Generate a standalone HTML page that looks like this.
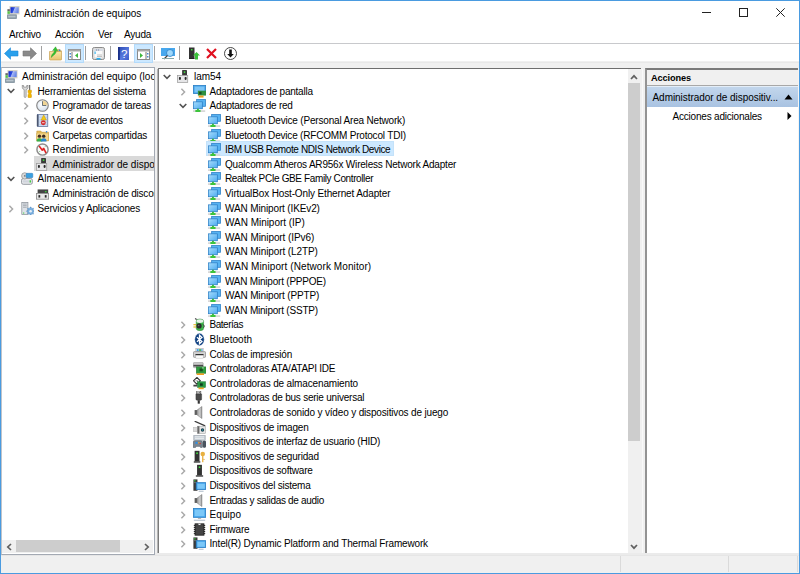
<!DOCTYPE html>
<html><head><meta charset="utf-8"><style>
html,body{margin:0;padding:0}
body{width:800px;height:574px;position:relative;overflow:hidden;background:#f0f0f0;font-family:"Liberation Sans", sans-serif}
#win{position:absolute;left:0;top:0;width:798px;height:572px;border:1px solid #4a9be0;background:#f0f0f0}
.t{position:absolute;white-space:nowrap;font-size:10px;line-height:14.6px;letter-spacing:-0.2px;color:#000}
</style></head><body>
<div id="win"></div>
<div style="position:absolute;left:1px;top:1px;width:798px;height:60px;background:#fff"></div>
<svg style="position:absolute;left:7.2px;top:5.6px" width="13" height="13" viewBox="0 0 16 16"><defs><linearGradient id="scr" x1="0" y1="0" x2="1" y2="0.3"><stop offset="0" stop-color="#0a1ec8"/><stop offset="0.45" stop-color="#3050e0"/><stop offset="0.55" stop-color="#a8b8f4"/><stop offset="1" stop-color="#6a88e8"/></linearGradient></defs>
<rect x="3" y="0" width="12.4" height="10.3" fill="#d8d4c6"/><rect x="4.3" y="1.5" width="10.1" height="7.3" fill="url(#scr)"/>
<rect x="0.5" y="3.9" width="3" height="2.5" fill="#666"/><rect x="0.5" y="6.4" width="3" height="3.3" fill="#58c048"/>
<rect x="0" y="10" width="12.2" height="6" rx="1" fill="#8c9ba6"/><rect x="1.5" y="12" width="9" height="2" fill="#b8c4cc"/></svg>
<div class="t" style="left:24px;top:6.9px;letter-spacing:0px">Administración de equipos</div>
<div style="position:absolute;left:702px;top:12px;width:9px;height:1px;background:#222"></div>
<div style="position:absolute;left:739px;top:8px;width:7px;height:7px;border:1px solid #222"></div>
<svg style="position:absolute;left:776px;top:8px" width="9" height="9" viewBox="0 0 9 9"><path d="M0.3 0.3 L8.7 8.7 M8.7 0.3 L0.3 8.7" stroke="#222" stroke-width="1"/></svg>
<div class="t" style="left:9px;top:27.9px;">Archivo</div>
<div class="t" style="left:55px;top:27.9px;">Acción</div>
<div class="t" style="left:98px;top:27.9px;">Ver</div>
<div class="t" style="left:124px;top:27.9px;">Ayuda</div>
<div style="position:absolute;left:1px;top:43px;width:798px;height:1px;background:#c8c9cc"></div>
<div style="position:absolute;left:1px;top:62px;width:798px;height:1px;background:#e8e8e8"></div>
<div style="position:absolute;left:65px;top:44px;width:17px;height:17px;background:#cce8ff;border:1px solid #b4dbfb"></div>
<div style="position:absolute;left:134px;top:44px;width:17px;height:17px;background:#cce8ff;border:1px solid #b4dbfb"></div>
<div style="position:absolute;left:41px;top:46px;width:1px;height:14px;background:#a0a0a0"></div>
<div style="position:absolute;left:85px;top:46px;width:1px;height:14px;background:#a0a0a0"></div>
<div style="position:absolute;left:110px;top:46px;width:1px;height:14px;background:#a0a0a0"></div>
<div style="position:absolute;left:154px;top:46px;width:1px;height:14px;background:#a0a0a0"></div>
<div style="position:absolute;left:179px;top:46px;width:1px;height:14px;background:#a0a0a0"></div>
<svg style="position:absolute;left:4px;top:47px" width="15" height="13" viewBox="0 0 15 13"><path d="M0.5 6.5 L6.5 0.8 V4 H14 V9 H6.5 V12.2 Z" fill="#2aa0ec" stroke="#1a88d8" stroke-width="0.6"/></svg>
<svg style="position:absolute;left:22px;top:47px" width="15" height="13" viewBox="0 0 15 13"><path d="M14.5 6.5 L8.5 0.8 V4 H1 V9 H8.5 V12.2 Z" fill="#8a8a8a" stroke="#777" stroke-width="0.6"/></svg>
<svg style="position:absolute;left:49px;top:46px" width="13" height="15" viewBox="0 0 13 15"><defs><linearGradient id="fo" x1="0" y1="0" x2="0" y2="1"><stop offset="0" stop-color="#fae6a8"/><stop offset="1" stop-color="#e8c470"/></linearGradient></defs><path d="M6 3.5 H11 L12.5 5 V5.5 H6 Z" fill="#e8c878" stroke="#c8a050" stroke-width="0.5"/><circle cx="10.5" cy="4.3" r="0.9" fill="#3a8ad8"/><path d="M0.5 5.5 H12.5 V13.5 Q12.5 14 12 14 H1 Q0.5 14 0.5 13.5 Z" fill="url(#fo)" stroke="#c8a050" stroke-width="0.7"/><path d="M2.2 11.5 Q2.8 8 4.8 6.5 Q6 5.5 5.2 4.2 L3.6 4.6 L6.6 0.8 L8.6 5 L7 4.6 Q7.6 6.6 5.8 8.2 Q4 9.6 2.2 11.5 Z" fill="#34c234" stroke="#1e9a1e" stroke-width="0.4"/></svg>
<svg style="position:absolute;left:68px;top:49px" width="13" height="11" viewBox="0 0 13 11"><rect x="0.5" y="0.5" width="12" height="10" fill="#fff" stroke="#8a8a8a"/><rect x="0.5" y="0.5" width="12" height="2" fill="#a8a8a8"/><path d="M4 3 V10" stroke="#777"/><path d="M10 4 L7 6.5 L10 9 Z" fill="#3cb83c"/><rect x="1.5" y="4" width="1.5" height="1.5" fill="#4a8ad0"/><rect x="1.5" y="7" width="1.5" height="1.5" fill="#4a8ad0"/></svg>
<svg style="position:absolute;left:137px;top:49px" width="13" height="11" viewBox="0 0 13 11"><rect x="0.5" y="0.5" width="12" height="10" fill="#fff" stroke="#8a8a8a"/><rect x="0.5" y="0.5" width="12" height="2" fill="#a8a8a8"/><path d="M9 3 V10" stroke="#777"/><path d="M3 4 L6 6.5 L3 9 Z" fill="#3cb83c"/><rect x="10" y="4" width="1.5" height="1.5" fill="#4a8ad0"/><rect x="10" y="7" width="1.5" height="1.5" fill="#4a8ad0"/></svg>
<svg style="position:absolute;left:92px;top:47px" width="13" height="13" viewBox="0 0 13 13"><rect x="0.5" y="0.5" width="12" height="12" rx="1.8" fill="#e8e8e8" stroke="#8a8a8a"/><rect x="2" y="2" width="9" height="9" fill="#fafafa" stroke="#b8b8b8" stroke-width="0.5"/><rect x="2" y="2" width="9" height="2" fill="#d8dce4"/><circle cx="4.5" cy="3" r="0.7" fill="#8a9ab0"/><circle cx="6.5" cy="3" r="0.7" fill="#8a9ab0"/><rect x="2.5" y="4.5" width="1.2" height="2.5" fill="#40b8f0"/><path d="M5 8 H10 M5 9.5 H10" stroke="#9a9a9a" stroke-width="0.6"/><rect x="4.5" y="11" width="4" height="1.6" fill="#2ab0f0"/></svg>
<svg style="position:absolute;left:118px;top:47px" width="11" height="13" viewBox="0 0 11 13"><defs><linearGradient id="hb" x1="0" y1="0" x2="1" y2="1"><stop offset="0" stop-color="#2846b0"/><stop offset="0.6" stop-color="#5a7ce0"/><stop offset="1" stop-color="#3a5ac8"/></linearGradient></defs><rect x="0" y="0" width="11" height="13" fill="url(#hb)"/><rect x="0" y="0" width="1.8" height="13" fill="#1a3088"/><text x="6.2" y="10.8" font-family="Liberation Sans" font-size="11.5" fill="#fff" text-anchor="middle">?</text></svg>
<svg style="position:absolute;left:161px;top:48px" width="14" height="12" viewBox="0 0 14 12"><rect x="0" y="0" width="14" height="8" fill="#48a8ee"/><circle cx="9" cy="5" r="3.5" fill="#9ed8fc" stroke="#2a7fc4" stroke-width="0.8"/><path d="M6.5 7.5 L3 11" stroke="#444" stroke-width="1.3"/><rect x="1" y="10" width="12" height="1" fill="#8aa"/></svg>
<svg style="position:absolute;left:189px;top:47px" width="11" height="13" viewBox="0 0 11 13"><rect x="0" y="0.5" width="5.5" height="11" fill="#333"/><rect x="2" y="2" width="1.5" height="1.5" fill="#3fdc3f"/><rect x="-0.5" y="11" width="6" height="1" fill="#222"/><path d="M7.5 5 L11 8.5 H9 V12.5 H6 V8.5 H4 Z" fill="#3ac03a"/></svg>
<svg style="position:absolute;left:206px;top:48px" width="11" height="11" viewBox="0 0 11 11"><path d="M1 1 L10 10 M10 1 L1 10" stroke="#e01020" stroke-width="2.2"/></svg>
<svg style="position:absolute;left:224px;top:47px" width="13" height="13" viewBox="0 0 13 13"><circle cx="6.5" cy="6.5" r="6" fill="#fff" stroke="#333" stroke-width="0.9"/><path d="M6.5 10.5 L3.2 7 H5.2 V2.5 H7.8 V7 H9.8 Z" fill="#111"/></svg>
<div style="position:absolute;left:1px;top:67px;width:152px;height:486px;border:1px solid #a3a9b3;border-left-color:#c0c4ca;background:#fff;overflow:hidden">
<svg style="position:absolute;left:3px;top:2.200000000000003px" width="13" height="13" viewBox="0 0 16 16"><defs><linearGradient id="scr" x1="0" y1="0" x2="1" y2="0.3"><stop offset="0" stop-color="#0a1ec8"/><stop offset="0.45" stop-color="#3050e0"/><stop offset="0.55" stop-color="#a8b8f4"/><stop offset="1" stop-color="#6a88e8"/></linearGradient></defs>
<rect x="3" y="0" width="12.4" height="10.3" fill="#d8d4c6"/><rect x="4.3" y="1.5" width="10.1" height="7.3" fill="url(#scr)"/>
<rect x="0.5" y="3.9" width="3" height="2.5" fill="#666"/><rect x="0.5" y="6.4" width="3" height="3.3" fill="#58c048"/>
<rect x="0" y="10" width="12.2" height="6" rx="1" fill="#8c9ba6"/><rect x="1.5" y="12" width="9" height="2" fill="#b8c4cc"/></svg>
<div class="t" style="left:20px;top:2.1000000000000028px;letter-spacing:0px">Administración del equipo (local)</div>
<svg style="position:absolute;left:4.049999999999999px;top:18.199999999999992px" width="10" height="10" viewBox="0 0 10 10"><path d="M1.7 3 L5 6.3 L8.3 3" fill="none" stroke="#535353" stroke-width="1.6"/></svg>
<svg style="position:absolute;left:18.5px;top:16.799999999999997px" width="13" height="13" viewBox="0 0 16 16"><path d="M1.6 0 V3 Q1.6 5 3.9 5.6 V14 Q3.9 15.4 5.1 15.4 Q6.3 15.4 6.3 14 V5.6 Q8.6 5 8.6 3 V0 L7 0.6 V2.6 H3.2 V0.6 Z" fill="#dcdcdc" stroke="#7c7c7c" stroke-width="0.8"/>
<rect x="10.2" y="0" width="1.1" height="7" fill="#3a3a3a"/><path d="M8.6 6.4 H12.9 V9 Q12 10 12.1 11 L12.9 12 V14.8 Q12.9 15.6 12 15.6 H9.5 Q8.6 15.6 8.6 14.8 V12 L9.4 11 Q9.5 10 8.6 9 Z" fill="#f2b600" stroke="#c88a00" stroke-width="0.5"/></svg>
<div class="t" style="left:35.5px;top:16.699999999999996px;letter-spacing:-0.204px">Herramientas del sistema</div>
<svg style="position:absolute;left:19.2px;top:33.45px" width="10" height="10" viewBox="0 0 10 10"><path d="M3.4 1.7 L6.6 5 L3.4 8.3" fill="none" stroke="#a8a8a8" stroke-width="1.45"/></svg>
<svg style="position:absolute;left:33.5px;top:31.400000000000006px" width="13" height="13" viewBox="0 0 16 16"><defs><radialGradient id="cf" cx="0.4" cy="0.4" r="0.7"><stop offset="0" stop-color="#ffffff"/><stop offset="1" stop-color="#cfdcec"/></radialGradient></defs>
<circle cx="8" cy="8" r="7.1" fill="url(#cf)" stroke="#858585" stroke-width="1.4"/><path d="M8 8 V1.7 A6.3 6.3 0 0 1 14.3 8 Z" fill="#efd08a" opacity="0.9"/><path d="M8 2.8 V8 H12.5" stroke="#3a4a5a" stroke-width="0.9" fill="none"/></svg>
<div class="t" style="left:50.5px;top:31.300000000000004px;letter-spacing:-0.205px">Programador de tareas</div>
<svg style="position:absolute;left:19.2px;top:48.05px" width="10" height="10" viewBox="0 0 10 10"><path d="M3.4 1.7 L6.6 5 L3.4 8.3" fill="none" stroke="#a8a8a8" stroke-width="1.45"/></svg>
<svg style="position:absolute;left:33.5px;top:46.0px" width="13" height="13" viewBox="0 0 16 16"><rect x="2" y="0.5" width="12.5" height="15" fill="#cddcf2" stroke="#5a6c94" stroke-width="0.9"/><rect x="1" y="1" width="2.2" height="14" fill="#4a5670"/><path d="M4 4 H14 M4 7 H14 M4 10 H14 M4 13 H14" stroke="#a8b8d8" stroke-width="0.6"/>
<path d="M9.5 1 L12.8 7.5 H6.2 Z" fill="#f2c818" stroke="#c09000" stroke-width="0.5"/><circle cx="9" cy="10.8" r="3" fill="#d42a2a"/><rect x="7.4" y="10.3" width="3.2" height="1" fill="#fff"/></svg>
<div class="t" style="left:50.5px;top:45.9px;letter-spacing:-0.247px">Visor de eventos</div>
<svg style="position:absolute;left:19.2px;top:62.65000000000002px" width="10" height="10" viewBox="0 0 10 10"><path d="M3.4 1.7 L6.6 5 L3.4 8.3" fill="none" stroke="#a8a8a8" stroke-width="1.45"/></svg>
<svg style="position:absolute;left:33.5px;top:60.599999999999994px" width="13" height="13" viewBox="0 0 16 16"><path d="M1 2.5 H6 L7 4 H15.5 V14.5 H1 Z" fill="#e8c060" stroke="#b89030" stroke-width="0.6"/><rect x="1" y="5" width="14.5" height="9.5" fill="#f6d88c" stroke="#c8a040" stroke-width="0.6"/><circle cx="13" cy="3.5" r="1" fill="#3a8ad8"/>
<circle cx="4.3" cy="8.8" r="2.1" fill="#4a3020"/><path d="M0.8 15.5 Q0.8 11.5 4.3 11.5 Q7.8 11.5 7.8 15.5 Z" fill="#34b04a"/><circle cx="9.5" cy="8.8" r="2.1" fill="#3a2a20"/><path d="M6 15.5 Q6 11.5 9.5 11.5 Q13 11.5 13 15.5 Z" fill="#2a88d0"/></svg>
<div class="t" style="left:50.5px;top:60.49999999999999px;letter-spacing:-0.158px">Carpetas compartidas</div>
<svg style="position:absolute;left:19.2px;top:77.25000000000001px" width="10" height="10" viewBox="0 0 10 10"><path d="M3.4 1.7 L6.6 5 L3.4 8.3" fill="none" stroke="#a8a8a8" stroke-width="1.45"/></svg>
<svg style="position:absolute;left:33.5px;top:75.19999999999999px" width="13" height="13" viewBox="0 0 16 16"><circle cx="8" cy="8" r="6.9" fill="#fafafa" stroke="#8c8c8c" stroke-width="1.8"/><path d="M3.8 3.8 L8 9.2 L9.3 6.3 L12.4 12.4" stroke="#e02424" stroke-width="2" fill="none" stroke-linejoin="bevel"/><path d="M4 10 L5 11 M11 4 L12 5" stroke="#40a040" stroke-width="0.8"/></svg>
<div class="t" style="left:50.5px;top:75.1px;letter-spacing:0.060px">Rendimiento</div>
<div style="position:absolute;left:32px;top:88.30000000000001px;width:200px;height:14.6px;background:#d9d9d9"></div>
<svg style="position:absolute;left:33.5px;top:89.80000000000001px" width="13" height="13" viewBox="0 0 16 16"><rect x="6.3" y="0" width="6" height="7" rx="0.8" fill="#3a3a3a"/><circle cx="9.3" cy="2.6" r="1.1" fill="#3fe03f"/>
<rect x="0.6" y="6.8" width="12.6" height="8.4" fill="#e6e6e8" stroke="#9a9a9a" stroke-width="0.9"/><rect x="2.4" y="8.6" width="2.4" height="3.6" rx="1" fill="#2a2a2a"/><rect x="9.4" y="8.6" width="2.4" height="3.6" rx="1" fill="#2a2a2a"/></svg>
<div class="t" style="left:50.5px;top:89.70000000000002px;letter-spacing:0px">Administrador de dispositivos</div>
<svg style="position:absolute;left:4.049999999999999px;top:105.80000000000003px" width="10" height="10" viewBox="0 0 10 10"><path d="M1.7 3 L5 6.3 L8.3 3" fill="none" stroke="#535353" stroke-width="1.6"/></svg>
<svg style="position:absolute;left:18.5px;top:104.4px" width="13" height="13" viewBox="0 0 16 16"><rect x="0.6" y="8" width="13.4" height="7.2" rx="2.2" fill="#e4e6ea" stroke="#7a8088" stroke-width="0.9"/><rect x="2.2" y="10.3" width="10" height="2.6" fill="#d0d4dc"/><rect x="10.6" y="10.3" width="1.8" height="2.6" fill="#3fcf3f"/>
<circle cx="4.6" cy="4.8" r="3.9" fill="#d8d8d8" stroke="#888" stroke-width="0.8"/><circle cx="4.6" cy="4.8" r="1" fill="#777"/><rect x="6.3" y="1.6" width="8.2" height="5.4" rx="1" fill="#3aa0e0" stroke="#2a78b8" stroke-width="0.6"/></svg>
<div class="t" style="left:35.5px;top:104.30000000000001px;letter-spacing:0.015px">Almacenamiento</div>
<svg style="position:absolute;left:33.5px;top:119.0px" width="13" height="13" viewBox="0 0 16 16"><rect x="2" y="3" width="13" height="5" fill="#444"/><rect x="11" y="5" width="2" height="1.5" fill="#3fcf3f"/><rect x="0.5" y="8" width="15" height="7" fill="#e8e8e8" stroke="#8a8a8a"/><rect x="3" y="10" width="2.2" height="3" fill="#2a2a2a"/><rect x="10.8" y="10" width="2.2" height="3" fill="#2a2a2a"/></svg>
<div class="t" style="left:50.5px;top:118.9px;">Administración de discos</div>
<svg style="position:absolute;left:4.199999999999999px;top:135.65000000000003px" width="10" height="10" viewBox="0 0 10 10"><path d="M3.4 1.7 L6.6 5 L3.4 8.3" fill="none" stroke="#a8a8a8" stroke-width="1.45"/></svg>
<svg style="position:absolute;left:18.5px;top:133.60000000000002px" width="13" height="13" viewBox="0 0 16 16"><rect x="1" y="0.5" width="7.5" height="15" fill="#dfe3e8" stroke="#8a9098" stroke-width="0.9"/><path d="M2.5 2.5 H7 M2.5 4.5 H7 M2.5 6.5 H7" stroke="#8a9098" stroke-width="0.8"/><rect x="2.5" y="13" width="1.5" height="1.2" fill="#3fcf3f"/>
<path d="M11.2 6.2 L12.4 6.2 L12.7 7.6 L13.9 8.1 L15 7.3 L15.8 8.2 L15 9.3 L15.5 10.5 L16 10.7 V11.9 L15.5 12.1 L15 13.3 L15.8 14.4 L15 15.2 L13.9 14.5 L12.7 15 L12.4 16 H11.2 L10.9 15 L9.7 14.5 L8.6 15.2 L7.8 14.4 L8.6 13.3 L8.1 12.1 L7 11.9 V10.7 L8.1 10.5 L8.6 9.3 L7.8 8.2 L8.6 7.3 L9.7 8.1 L10.9 7.6 Z" fill="#7ab0e0" stroke="#4a80b8" stroke-width="0.5"/><circle cx="11.8" cy="11.3" r="1.6" fill="#e8f0f8"/></svg>
<div class="t" style="left:35.5px;top:133.50000000000003px;letter-spacing:-0.174px">Servicios y Aplicaciones</div>
<div style="position:absolute;left:0px;top:472px;width:151px;height:13px;background:#f0f0f0"></div>
<div style="position:absolute;left:14px;top:472px;width:104px;height:12px;background:#cdcdcd"></div>
<svg style="position:absolute;left:4px;top:474.5px" width="6" height="8" viewBox="0 0 6 8"><path d="M5 1 L1.8 4 L5 7" fill="none" stroke="#606060" stroke-width="1.7"/></svg>
<svg style="position:absolute;left:142px;top:474.5px" width="6" height="8" viewBox="0 0 6 8"><path d="M1 1 L4.2 4 L1 7" fill="none" stroke="#606060" stroke-width="1.7"/></svg>
</div>
<div style="position:absolute;left:158px;top:68px;width:482px;height:484px;border-left:1px solid #7a7a7a;border-top:1px solid #6e6e6e;background:#fff;overflow:hidden">
<svg style="position:absolute;left:3.35px;top:2.599999999999997px" width="10" height="10" viewBox="0 0 10 10"><path d="M1.7 3 L5 6.3 L8.3 3" fill="none" stroke="#535353" stroke-width="1.6"/></svg>
<svg style="position:absolute;left:18px;top:1.2000000000000028px" width="13" height="13" viewBox="0 0 16 16"><rect x="6.3" y="0" width="6" height="7" rx="0.8" fill="#3a3a3a"/><circle cx="9.3" cy="2.6" r="1.1" fill="#3fe03f"/>
<rect x="0.6" y="6.8" width="12.6" height="8.4" fill="#e6e6e8" stroke="#9a9a9a" stroke-width="0.9"/><rect x="2.4" y="8.6" width="2.4" height="3.6" rx="1" fill="#2a2a2a"/><rect x="9.4" y="8.6" width="2.4" height="3.6" rx="1" fill="#2a2a2a"/></svg>
<div class="t" style="left:35px;top:1.1000000000000028px;letter-spacing:-0.013px">lam54</div>
<svg style="position:absolute;left:19.0px;top:17.84999999999999px" width="10" height="10" viewBox="0 0 10 10"><path d="M3.4 1.7 L6.6 5 L3.4 8.3" fill="none" stroke="#a8a8a8" stroke-width="1.45"/></svg>
<svg style="position:absolute;left:33.5px;top:15.799999999999997px" width="13" height="13" viewBox="0 0 16 16"><rect x="0.5" y="0.5" width="15" height="10" fill="#49a6ec" stroke="#2a7fc4"/><rect x="2" y="2" width="12" height="7" fill="#7cc4f6"/>
<rect x="6" y="7" width="10" height="6" fill="#2f8f3f"/><rect x="7.5" y="8.5" width="3" height="3" fill="#1c4d22"/><rect x="7" y="13" width="6" height="2.5" fill="#f0a020"/></svg>
<div class="t" style="left:50.5px;top:15.699999999999998px;letter-spacing:-0.223px">Adaptadores de pantalla</div>
<svg style="position:absolute;left:18.85px;top:31.8px" width="10" height="10" viewBox="0 0 10 10"><path d="M1.7 3 L5 6.3 L8.3 3" fill="none" stroke="#535353" stroke-width="1.6"/></svg>
<svg style="position:absolute;left:33.5px;top:30.400000000000006px" width="13" height="13" viewBox="0 0 16 16"><defs><linearGradient id="nw" x1="0" y1="0" x2="1" y2="1"><stop offset="0" stop-color="#a8ddfc"/><stop offset="1" stop-color="#4caaf0"/></linearGradient></defs><rect x="4.5" y="0.5" width="11" height="8.5" fill="#56b2f2" stroke="#2a7cc4" stroke-width="0.9"/><rect x="0.5" y="3.5" width="11" height="8.5" fill="url(#nw)" stroke="#2a7cc4" stroke-width="0.9"/>
<rect x="0" y="13.8" width="15" height="2.2" fill="#d8d8d8"/><rect x="5" y="12" width="2.2" height="2" fill="#34b834"/><rect x="2.8" y="13.6" width="6.6" height="2.4" rx="0.6" fill="#3cc43c"/></svg>
<div class="t" style="left:50.5px;top:30.300000000000004px;letter-spacing:-0.265px">Adaptadores de red</div>
<svg style="position:absolute;left:49px;top:45.0px" width="13" height="13" viewBox="0 0 16 16"><defs><linearGradient id="nw" x1="0" y1="0" x2="1" y2="1"><stop offset="0" stop-color="#a8ddfc"/><stop offset="1" stop-color="#4caaf0"/></linearGradient></defs><rect x="4.5" y="0.5" width="11" height="8.5" fill="#56b2f2" stroke="#2a7cc4" stroke-width="0.9"/><rect x="0.5" y="3.5" width="11" height="8.5" fill="url(#nw)" stroke="#2a7cc4" stroke-width="0.9"/>
<rect x="0" y="13.8" width="15" height="2.2" fill="#d8d8d8"/><rect x="5" y="12" width="2.2" height="2" fill="#34b834"/><rect x="2.8" y="13.6" width="6.6" height="2.4" rx="0.6" fill="#3cc43c"/></svg>
<div class="t" style="left:66px;top:44.9px;letter-spacing:-0.182px">Bluetooth Device (Personal Area Network)</div>
<svg style="position:absolute;left:49px;top:59.599999999999994px" width="13" height="13" viewBox="0 0 16 16"><defs><linearGradient id="nw" x1="0" y1="0" x2="1" y2="1"><stop offset="0" stop-color="#a8ddfc"/><stop offset="1" stop-color="#4caaf0"/></linearGradient></defs><rect x="4.5" y="0.5" width="11" height="8.5" fill="#56b2f2" stroke="#2a7cc4" stroke-width="0.9"/><rect x="0.5" y="3.5" width="11" height="8.5" fill="url(#nw)" stroke="#2a7cc4" stroke-width="0.9"/>
<rect x="0" y="13.8" width="15" height="2.2" fill="#d8d8d8"/><rect x="5" y="12" width="2.2" height="2" fill="#34b834"/><rect x="2.8" y="13.6" width="6.6" height="2.4" rx="0.6" fill="#3cc43c"/></svg>
<div class="t" style="left:66px;top:59.49999999999999px;letter-spacing:-0.192px">Bluetooth Device (RFCOMM Protocol TDI)</div>
<div style="position:absolute;left:47px;top:72.1px;width:188px;height:14.6px;background:#cce8ff;border:1px solid #c4e2fa;box-sizing:border-box"></div>
<svg style="position:absolute;left:49px;top:74.19999999999999px" width="13" height="13" viewBox="0 0 16 16"><defs><linearGradient id="nw" x1="0" y1="0" x2="1" y2="1"><stop offset="0" stop-color="#a8ddfc"/><stop offset="1" stop-color="#4caaf0"/></linearGradient></defs><rect x="4.5" y="0.5" width="11" height="8.5" fill="#56b2f2" stroke="#2a7cc4" stroke-width="0.9"/><rect x="0.5" y="3.5" width="11" height="8.5" fill="url(#nw)" stroke="#2a7cc4" stroke-width="0.9"/>
<rect x="0" y="13.8" width="15" height="2.2" fill="#d8d8d8"/><rect x="5" y="12" width="2.2" height="2" fill="#34b834"/><rect x="2.8" y="13.6" width="6.6" height="2.4" rx="0.6" fill="#3cc43c"/></svg>
<div class="t" style="left:66px;top:74.1px;letter-spacing:-0.385px">IBM USB Remote NDIS Network Device</div>
<svg style="position:absolute;left:49px;top:88.80000000000001px" width="13" height="13" viewBox="0 0 16 16"><defs><linearGradient id="nw" x1="0" y1="0" x2="1" y2="1"><stop offset="0" stop-color="#a8ddfc"/><stop offset="1" stop-color="#4caaf0"/></linearGradient></defs><rect x="4.5" y="0.5" width="11" height="8.5" fill="#56b2f2" stroke="#2a7cc4" stroke-width="0.9"/><rect x="0.5" y="3.5" width="11" height="8.5" fill="url(#nw)" stroke="#2a7cc4" stroke-width="0.9"/>
<rect x="0" y="13.8" width="15" height="2.2" fill="#d8d8d8"/><rect x="5" y="12" width="2.2" height="2" fill="#34b834"/><rect x="2.8" y="13.6" width="6.6" height="2.4" rx="0.6" fill="#3cc43c"/></svg>
<div class="t" style="left:66px;top:88.70000000000002px;letter-spacing:-0.198px">Qualcomm Atheros AR956x Wireless Network Adapter</div>
<svg style="position:absolute;left:49px;top:103.4px" width="13" height="13" viewBox="0 0 16 16"><defs><linearGradient id="nw" x1="0" y1="0" x2="1" y2="1"><stop offset="0" stop-color="#a8ddfc"/><stop offset="1" stop-color="#4caaf0"/></linearGradient></defs><rect x="4.5" y="0.5" width="11" height="8.5" fill="#56b2f2" stroke="#2a7cc4" stroke-width="0.9"/><rect x="0.5" y="3.5" width="11" height="8.5" fill="url(#nw)" stroke="#2a7cc4" stroke-width="0.9"/>
<rect x="0" y="13.8" width="15" height="2.2" fill="#d8d8d8"/><rect x="5" y="12" width="2.2" height="2" fill="#34b834"/><rect x="2.8" y="13.6" width="6.6" height="2.4" rx="0.6" fill="#3cc43c"/></svg>
<div class="t" style="left:66px;top:103.30000000000001px;letter-spacing:-0.385px">Realtek PCIe GBE Family Controller</div>
<svg style="position:absolute;left:49px;top:118.0px" width="13" height="13" viewBox="0 0 16 16"><defs><linearGradient id="nw" x1="0" y1="0" x2="1" y2="1"><stop offset="0" stop-color="#a8ddfc"/><stop offset="1" stop-color="#4caaf0"/></linearGradient></defs><rect x="4.5" y="0.5" width="11" height="8.5" fill="#56b2f2" stroke="#2a7cc4" stroke-width="0.9"/><rect x="0.5" y="3.5" width="11" height="8.5" fill="url(#nw)" stroke="#2a7cc4" stroke-width="0.9"/>
<rect x="0" y="13.8" width="15" height="2.2" fill="#d8d8d8"/><rect x="5" y="12" width="2.2" height="2" fill="#34b834"/><rect x="2.8" y="13.6" width="6.6" height="2.4" rx="0.6" fill="#3cc43c"/></svg>
<div class="t" style="left:66px;top:117.9px;letter-spacing:-0.139px">VirtualBox Host-Only Ethernet Adapter</div>
<svg style="position:absolute;left:49px;top:132.60000000000002px" width="13" height="13" viewBox="0 0 16 16"><defs><linearGradient id="nw" x1="0" y1="0" x2="1" y2="1"><stop offset="0" stop-color="#a8ddfc"/><stop offset="1" stop-color="#4caaf0"/></linearGradient></defs><rect x="4.5" y="0.5" width="11" height="8.5" fill="#56b2f2" stroke="#2a7cc4" stroke-width="0.9"/><rect x="0.5" y="3.5" width="11" height="8.5" fill="url(#nw)" stroke="#2a7cc4" stroke-width="0.9"/>
<rect x="0" y="13.8" width="15" height="2.2" fill="#d8d8d8"/><rect x="5" y="12" width="2.2" height="2" fill="#34b834"/><rect x="2.8" y="13.6" width="6.6" height="2.4" rx="0.6" fill="#3cc43c"/></svg>
<div class="t" style="left:66px;top:132.50000000000003px;letter-spacing:-0.132px">WAN Miniport (IKEv2)</div>
<svg style="position:absolute;left:49px;top:147.2px" width="13" height="13" viewBox="0 0 16 16"><defs><linearGradient id="nw" x1="0" y1="0" x2="1" y2="1"><stop offset="0" stop-color="#a8ddfc"/><stop offset="1" stop-color="#4caaf0"/></linearGradient></defs><rect x="4.5" y="0.5" width="11" height="8.5" fill="#56b2f2" stroke="#2a7cc4" stroke-width="0.9"/><rect x="0.5" y="3.5" width="11" height="8.5" fill="url(#nw)" stroke="#2a7cc4" stroke-width="0.9"/>
<rect x="0" y="13.8" width="15" height="2.2" fill="#d8d8d8"/><rect x="5" y="12" width="2.2" height="2" fill="#34b834"/><rect x="2.8" y="13.6" width="6.6" height="2.4" rx="0.6" fill="#3cc43c"/></svg>
<div class="t" style="left:66px;top:147.1px;letter-spacing:-0.025px">WAN Miniport (IP)</div>
<svg style="position:absolute;left:49px;top:161.8px" width="13" height="13" viewBox="0 0 16 16"><defs><linearGradient id="nw" x1="0" y1="0" x2="1" y2="1"><stop offset="0" stop-color="#a8ddfc"/><stop offset="1" stop-color="#4caaf0"/></linearGradient></defs><rect x="4.5" y="0.5" width="11" height="8.5" fill="#56b2f2" stroke="#2a7cc4" stroke-width="0.9"/><rect x="0.5" y="3.5" width="11" height="8.5" fill="url(#nw)" stroke="#2a7cc4" stroke-width="0.9"/>
<rect x="0" y="13.8" width="15" height="2.2" fill="#d8d8d8"/><rect x="5" y="12" width="2.2" height="2" fill="#34b834"/><rect x="2.8" y="13.6" width="6.6" height="2.4" rx="0.6" fill="#3cc43c"/></svg>
<div class="t" style="left:66px;top:161.70000000000002px;letter-spacing:-0.083px">WAN Miniport (IPv6)</div>
<svg style="position:absolute;left:49px;top:176.39999999999998px" width="13" height="13" viewBox="0 0 16 16"><defs><linearGradient id="nw" x1="0" y1="0" x2="1" y2="1"><stop offset="0" stop-color="#a8ddfc"/><stop offset="1" stop-color="#4caaf0"/></linearGradient></defs><rect x="4.5" y="0.5" width="11" height="8.5" fill="#56b2f2" stroke="#2a7cc4" stroke-width="0.9"/><rect x="0.5" y="3.5" width="11" height="8.5" fill="url(#nw)" stroke="#2a7cc4" stroke-width="0.9"/>
<rect x="0" y="13.8" width="15" height="2.2" fill="#d8d8d8"/><rect x="5" y="12" width="2.2" height="2" fill="#34b834"/><rect x="2.8" y="13.6" width="6.6" height="2.4" rx="0.6" fill="#3cc43c"/></svg>
<div class="t" style="left:66px;top:176.29999999999998px;letter-spacing:-0.100px">WAN Miniport (L2TP)</div>
<svg style="position:absolute;left:49px;top:191.0px" width="13" height="13" viewBox="0 0 16 16"><defs><linearGradient id="nw" x1="0" y1="0" x2="1" y2="1"><stop offset="0" stop-color="#a8ddfc"/><stop offset="1" stop-color="#4caaf0"/></linearGradient></defs><rect x="4.5" y="0.5" width="11" height="8.5" fill="#56b2f2" stroke="#2a7cc4" stroke-width="0.9"/><rect x="0.5" y="3.5" width="11" height="8.5" fill="url(#nw)" stroke="#2a7cc4" stroke-width="0.9"/>
<rect x="0" y="13.8" width="15" height="2.2" fill="#d8d8d8"/><rect x="5" y="12" width="2.2" height="2" fill="#34b834"/><rect x="2.8" y="13.6" width="6.6" height="2.4" rx="0.6" fill="#3cc43c"/></svg>
<div class="t" style="left:66px;top:190.9px;letter-spacing:0.090px">WAN Miniport (Network Monitor)</div>
<svg style="position:absolute;left:49px;top:205.60000000000002px" width="13" height="13" viewBox="0 0 16 16"><defs><linearGradient id="nw" x1="0" y1="0" x2="1" y2="1"><stop offset="0" stop-color="#a8ddfc"/><stop offset="1" stop-color="#4caaf0"/></linearGradient></defs><rect x="4.5" y="0.5" width="11" height="8.5" fill="#56b2f2" stroke="#2a7cc4" stroke-width="0.9"/><rect x="0.5" y="3.5" width="11" height="8.5" fill="url(#nw)" stroke="#2a7cc4" stroke-width="0.9"/>
<rect x="0" y="13.8" width="15" height="2.2" fill="#d8d8d8"/><rect x="5" y="12" width="2.2" height="2" fill="#34b834"/><rect x="2.8" y="13.6" width="6.6" height="2.4" rx="0.6" fill="#3cc43c"/></svg>
<div class="t" style="left:66px;top:205.50000000000003px;letter-spacing:-0.216px">WAN Miniport (PPPOE)</div>
<svg style="position:absolute;left:49px;top:220.2px" width="13" height="13" viewBox="0 0 16 16"><defs><linearGradient id="nw" x1="0" y1="0" x2="1" y2="1"><stop offset="0" stop-color="#a8ddfc"/><stop offset="1" stop-color="#4caaf0"/></linearGradient></defs><rect x="4.5" y="0.5" width="11" height="8.5" fill="#56b2f2" stroke="#2a7cc4" stroke-width="0.9"/><rect x="0.5" y="3.5" width="11" height="8.5" fill="url(#nw)" stroke="#2a7cc4" stroke-width="0.9"/>
<rect x="0" y="13.8" width="15" height="2.2" fill="#d8d8d8"/><rect x="5" y="12" width="2.2" height="2" fill="#34b834"/><rect x="2.8" y="13.6" width="6.6" height="2.4" rx="0.6" fill="#3cc43c"/></svg>
<div class="t" style="left:66px;top:220.1px;letter-spacing:-0.139px">WAN Miniport (PPTP)</div>
<svg style="position:absolute;left:49px;top:234.8px" width="13" height="13" viewBox="0 0 16 16"><defs><linearGradient id="nw" x1="0" y1="0" x2="1" y2="1"><stop offset="0" stop-color="#a8ddfc"/><stop offset="1" stop-color="#4caaf0"/></linearGradient></defs><rect x="4.5" y="0.5" width="11" height="8.5" fill="#56b2f2" stroke="#2a7cc4" stroke-width="0.9"/><rect x="0.5" y="3.5" width="11" height="8.5" fill="url(#nw)" stroke="#2a7cc4" stroke-width="0.9"/>
<rect x="0" y="13.8" width="15" height="2.2" fill="#d8d8d8"/><rect x="5" y="12" width="2.2" height="2" fill="#34b834"/><rect x="2.8" y="13.6" width="6.6" height="2.4" rx="0.6" fill="#3cc43c"/></svg>
<div class="t" style="left:66px;top:234.70000000000002px;letter-spacing:-0.211px">WAN Miniport (SSTP)</div>
<svg style="position:absolute;left:19.0px;top:251.45px" width="10" height="10" viewBox="0 0 10 10"><path d="M3.4 1.7 L6.6 5 L3.4 8.3" fill="none" stroke="#a8a8a8" stroke-width="1.45"/></svg>
<svg style="position:absolute;left:33.5px;top:249.39999999999998px" width="13" height="13" viewBox="0 0 16 16"><path d="M4 4 Q4 1.2 8.5 1.2 Q13 1.2 13 4 V13 Q13 15.6 8.5 15.6 Q4 15.6 4 13 Z" fill="#3cb84a" stroke="#2a7a34" stroke-width="0.6"/><path d="M4.2 4 Q4.2 1.5 8.5 1.5 Q12.8 1.5 12.8 4 Q12.8 6 8.5 6 Q4.2 6 4.2 4 Z" fill="#e8f0e8"/>
<path d="M5 1.5 Q2 2 3 0.3" stroke="#222" stroke-width="1" fill="none"/><path d="M12 8 Q15.5 9 13 12" stroke="#222" stroke-width="1" fill="none"/>
<path d="M0.5 8.3 H4 M0.5 11 H4" stroke="#e0b000" stroke-width="1.3"/><circle cx="7.5" cy="9.8" r="3.2" fill="#2a2a2a"/><circle cx="7" cy="9.3" r="1" fill="#666"/></svg>
<div class="t" style="left:50.5px;top:249.29999999999998px;letter-spacing:-0.471px">Baterías</div>
<svg style="position:absolute;left:19.0px;top:266.05px" width="10" height="10" viewBox="0 0 10 10"><path d="M3.4 1.7 L6.6 5 L3.4 8.3" fill="none" stroke="#a8a8a8" stroke-width="1.45"/></svg>
<svg style="position:absolute;left:33.5px;top:264.0px" width="13" height="13" viewBox="0 0 16 16"><ellipse cx="8" cy="8" rx="5.8" ry="7.6" fill="#0d3f80" stroke="#e8eef8" stroke-width="0.5"/><path d="M4.8 5.2 L11 10.6 L8 13.2 V2.8 L11 5.4 L4.8 10.8" stroke="#fff" stroke-width="1.6" fill="none" stroke-linejoin="miter"/></svg>
<div class="t" style="left:50.5px;top:263.9px;letter-spacing:0.038px">Bluetooth</div>
<svg style="position:absolute;left:19.0px;top:280.65px" width="10" height="10" viewBox="0 0 10 10"><path d="M3.4 1.7 L6.6 5 L3.4 8.3" fill="none" stroke="#a8a8a8" stroke-width="1.45"/></svg>
<svg style="position:absolute;left:33.5px;top:278.59999999999997px" width="13" height="13" viewBox="0 0 16 16"><rect x="3.5" y="0.5" width="9" height="4" fill="#f4f4f4" stroke="#9a9a9a" stroke-width="0.6"/><rect x="4.5" y="1.5" width="2.5" height="2" fill="#2a90e0"/><rect x="7.5" y="1.5" width="2.5" height="2" fill="#3ab03a"/><rect x="10.2" y="1.5" width="1.5" height="2" fill="#2a90e0"/>
<rect x="0.5" y="4.5" width="15" height="7" rx="1" fill="#d4d4d4" stroke="#7a7a7a" stroke-width="0.8"/><rect x="3" y="7.5" width="10" height="1.6" fill="#222"/><rect x="3.5" y="9" width="9" height="3.5" fill="#fafafa" stroke="#b0b0b0" stroke-width="0.5"/></svg>
<div class="t" style="left:50.5px;top:278.49999999999994px;letter-spacing:-0.165px">Colas de impresión</div>
<svg style="position:absolute;left:19.0px;top:295.25px" width="10" height="10" viewBox="0 0 10 10"><path d="M3.4 1.7 L6.6 5 L3.4 8.3" fill="none" stroke="#a8a8a8" stroke-width="1.45"/></svg>
<svg style="position:absolute;left:33.5px;top:293.2px" width="13" height="13" viewBox="0 0 16 16"><rect x="0.5" y="0.5" width="12" height="6.5" rx="1" fill="#c8c8c8" stroke="#8a8a8a" stroke-width="0.6"/><rect x="0.5" y="3.5" width="12" height="2" fill="#4a4a4a"/>
<rect x="4" y="6" width="12" height="8" fill="#2e9b3e" stroke="#1e6a2a" stroke-width="0.5"/><rect x="8" y="8" width="4" height="3.5" fill="#174f1f"/><rect x="11.5" y="6.5" width="1.5" height="1.5" fill="#c8e8c8"/><rect x="4.5" y="14" width="9" height="2" fill="#f0a020"/></svg>
<div class="t" style="left:50.5px;top:293.09999999999997px;letter-spacing:-0.258px">Controladoras ATA/ATAPI IDE</div>
<svg style="position:absolute;left:19.0px;top:309.84999999999997px" width="10" height="10" viewBox="0 0 10 10"><path d="M3.4 1.7 L6.6 5 L3.4 8.3" fill="none" stroke="#a8a8a8" stroke-width="1.45"/></svg>
<svg style="position:absolute;left:33.5px;top:307.79999999999995px" width="13" height="13" viewBox="0 0 16 16"><path d="M4.8 0.6 L9 4.7 L4.8 8.8 L0.6 4.7 Z" fill="#fff" stroke="#333" stroke-width="1.3"/><path d="M3 4.7 H6.6" stroke="#555" stroke-width="0.7"/><rect x="0.5" y="9.5" width="5" height="2.2" fill="#444"/>
<rect x="5.5" y="5.8" width="10" height="7.2" fill="#2a9a44" stroke="#1a6a2e" stroke-width="0.5"/><rect x="8.5" y="7.8" width="3.5" height="3" fill="#103a1a"/><rect x="6.8" y="13" width="6.4" height="2" fill="#f0a820"/></svg>
<div class="t" style="left:50.5px;top:307.69999999999993px;letter-spacing:-0.140px">Controladoras de almacenamiento</div>
<svg style="position:absolute;left:19.0px;top:324.45px" width="10" height="10" viewBox="0 0 10 10"><path d="M3.4 1.7 L6.6 5 L3.4 8.3" fill="none" stroke="#a8a8a8" stroke-width="1.45"/></svg>
<svg style="position:absolute;left:33.5px;top:322.4px" width="13" height="13" viewBox="0 0 16 16"><rect x="4.6" y="0" width="5" height="3.6" fill="#fff" stroke="#333" stroke-width="0.8"/><rect x="5.6" y="1" width="1.1" height="1.1" fill="#222"/><rect x="7.6" y="1" width="1.1" height="1.1" fill="#222"/>
<path d="M3.6 3.6 H10.6 V10 Q10.6 11.4 9 11.4 H5.2 Q3.6 11.4 3.6 10 Z" fill="#4a4a4a" stroke="#2a2a2a" stroke-width="0.5"/><rect x="5.8" y="11.4" width="2.6" height="4.2" fill="#333"/></svg>
<div class="t" style="left:50.5px;top:322.29999999999995px;letter-spacing:-0.226px">Controladoras de bus serie universal</div>
<svg style="position:absolute;left:19.0px;top:339.05px" width="10" height="10" viewBox="0 0 10 10"><path d="M3.4 1.7 L6.6 5 L3.4 8.3" fill="none" stroke="#a8a8a8" stroke-width="1.45"/></svg>
<svg style="position:absolute;left:33.5px;top:337.0px" width="13" height="13" viewBox="0 0 16 16"><defs><linearGradient id="spk" x1="0" y1="0" x2="1" y2="0"><stop offset="0" stop-color="#9a9a9a"/><stop offset="0.6" stop-color="#d0d0d0"/><stop offset="1" stop-color="#8a8a8a"/></linearGradient></defs><rect x="2" y="5" width="3.2" height="6" fill="#5e5e5e"/><path d="M5 5 L11 0.5 V15.5 L5 11 Z" fill="url(#spk)" stroke="#7a7a7a" stroke-width="0.6"/></svg>
<div class="t" style="left:50.5px;top:336.9px;letter-spacing:-0.159px">Controladoras de sonido y vídeo y dispositivos de juego</div>
<svg style="position:absolute;left:19.0px;top:353.65px" width="10" height="10" viewBox="0 0 10 10"><path d="M3.4 1.7 L6.6 5 L3.4 8.3" fill="none" stroke="#a8a8a8" stroke-width="1.45"/></svg>
<svg style="position:absolute;left:33.5px;top:351.59999999999997px" width="13" height="13" viewBox="0 0 16 16"><path d="M2 0.3 L15 6" stroke="#3a3a3a" stroke-width="1.6"/><rect x="0" y="8" width="5.5" height="5" fill="#d8d8d8" stroke="#a0a0a0" stroke-width="0.5"/><rect x="5.5" y="6.4" width="10" height="9" fill="#e6e6e6" stroke="#9a9a9a" stroke-width="0.6"/><rect x="5.5" y="6.4" width="2.4" height="9" fill="#6a6a6a"/><circle cx="11.7" cy="11" r="2.1" fill="#1a3a48"/><circle cx="11.7" cy="11" r="1" fill="#2a9aa8"/></svg>
<div class="t" style="left:50.5px;top:351.49999999999994px;letter-spacing:-0.167px">Dispositivos de imagen</div>
<svg style="position:absolute;left:19.0px;top:368.25px" width="10" height="10" viewBox="0 0 10 10"><path d="M3.4 1.7 L6.6 5 L3.4 8.3" fill="none" stroke="#a8a8a8" stroke-width="1.45"/></svg>
<svg style="position:absolute;left:33.5px;top:366.2px" width="13" height="13" viewBox="0 0 16 16"><rect x="1" y="0.5" width="14" height="6" fill="#c4ccd4" stroke="#8a949e" stroke-width="0.6"/><path d="M2.5 2.3 H13.5 M2.5 4.5 H13.5" stroke="#f4f6f8" stroke-width="1"/>
<path d="M-0.3 9.5 Q-0.3 7 3 7 H9.5 Q11.8 7 11.8 9.5 V14 Q11.8 15.7 10.2 15.7 Q9 15.7 8.5 14 H4 Q3.5 15.7 2 15.7 Q-0.3 15.7 -0.3 14 Z" fill="#7c8690" stroke="#4a545e" stroke-width="0.5"/><rect x="3" y="8.5" width="2.6" height="2.4" fill="#2a90e8"/><circle cx="7.2" cy="9.6" r="1" fill="#e8a030"/><circle cx="8.8" cy="10.4" r="0.9" fill="#d03030"/><rect x="12" y="7" width="4" height="8.6" rx="1.3" fill="#4a545e"/></svg>
<div class="t" style="left:50.5px;top:366.09999999999997px;letter-spacing:-0.203px">Dispositivos de interfaz de usuario (HID)</div>
<svg style="position:absolute;left:19.0px;top:382.84999999999997px" width="10" height="10" viewBox="0 0 10 10"><path d="M3.4 1.7 L6.6 5 L3.4 8.3" fill="none" stroke="#a8a8a8" stroke-width="1.45"/></svg>
<svg style="position:absolute;left:33.5px;top:380.79999999999995px" width="13" height="13" viewBox="0 0 16 16"><rect x="2" y="1" width="6" height="13" fill="#333"/><rect x="4" y="3" width="2" height="2" fill="#3fdc3f"/><rect x="1" y="14" width="8" height="1.5" fill="#222"/>
<circle cx="12" cy="5" r="2.8" fill="#e8b040"/><rect x="11.2" y="7" width="1.6" height="8" fill="#e8b040"/><rect x="12.8" y="11" width="1.5" height="1.2" fill="#e8b040"/></svg>
<div class="t" style="left:50.5px;top:380.69999999999993px;letter-spacing:-0.183px">Dispositivos de seguridad</div>
<svg style="position:absolute;left:19.0px;top:397.45px" width="10" height="10" viewBox="0 0 10 10"><path d="M3.4 1.7 L6.6 5 L3.4 8.3" fill="none" stroke="#a8a8a8" stroke-width="1.45"/></svg>
<svg style="position:absolute;left:33.5px;top:395.4px" width="13" height="13" viewBox="0 0 16 16"><rect x="5" y="1" width="6" height="13" fill="#333"/><rect x="7" y="3" width="2" height="2" fill="#3fdc3f"/><rect x="3.5" y="14" width="9" height="1.5" fill="#222"/></svg>
<div class="t" style="left:50.5px;top:395.29999999999995px;letter-spacing:-0.191px">Dispositivos de software</div>
<svg style="position:absolute;left:19.0px;top:412.05px" width="10" height="10" viewBox="0 0 10 10"><path d="M3.4 1.7 L6.6 5 L3.4 8.3" fill="none" stroke="#a8a8a8" stroke-width="1.45"/></svg>
<svg style="position:absolute;left:33.5px;top:410.0px" width="13" height="13" viewBox="0 0 16 16"><rect x="0.5" y="0.5" width="5" height="14" fill="#3a3a3a"/><rect x="1.5" y="1.5" width="1.5" height="1.5" fill="#3fdc3f"/><rect x="1" y="4" width="4" height="1" fill="#777"/>
<rect x="4" y="4.5" width="11.5" height="8.5" fill="#48a8ee" stroke="#2a7fc4"/><rect x="5.5" y="6" width="9" height="6" fill="#7cc8f8"/><rect x="7" y="14.5" width="6" height="1" fill="#9ab"/></svg>
<div class="t" style="left:50.5px;top:409.9px;letter-spacing:-0.239px">Dispositivos del sistema</div>
<svg style="position:absolute;left:19.0px;top:426.65px" width="10" height="10" viewBox="0 0 10 10"><path d="M3.4 1.7 L6.6 5 L3.4 8.3" fill="none" stroke="#a8a8a8" stroke-width="1.45"/></svg>
<svg style="position:absolute;left:33.5px;top:424.59999999999997px" width="13" height="13" viewBox="0 0 16 16"><defs><linearGradient id="spk" x1="0" y1="0" x2="1" y2="0"><stop offset="0" stop-color="#9a9a9a"/><stop offset="0.6" stop-color="#d0d0d0"/><stop offset="1" stop-color="#8a8a8a"/></linearGradient></defs><rect x="2" y="5" width="3.2" height="6" fill="#5e5e5e"/><path d="M5 5 L11 0.5 V15.5 L5 11 Z" fill="url(#spk)" stroke="#7a7a7a" stroke-width="0.6"/></svg>
<div class="t" style="left:50.5px;top:424.49999999999994px;letter-spacing:-0.312px">Entradas y salidas de audio</div>
<svg style="position:absolute;left:19.0px;top:441.24999999999994px" width="10" height="10" viewBox="0 0 10 10"><path d="M3.4 1.7 L6.6 5 L3.4 8.3" fill="none" stroke="#a8a8a8" stroke-width="1.45"/></svg>
<svg style="position:absolute;left:33.5px;top:439.2px" width="13" height="13" viewBox="0 0 16 16"><rect x="0.5" y="0.5" width="15" height="11" fill="#48a8ee" stroke="#2a7fc4"/><rect x="2" y="2" width="12" height="8" fill="#7cc8f8"/><rect x="6" y="12.5" width="4" height="1" fill="#aaa"/><rect x="1" y="14.5" width="14" height="1" fill="#9ab"/></svg>
<div class="t" style="left:50.5px;top:439.09999999999997px;letter-spacing:0.080px">Equipo</div>
<svg style="position:absolute;left:19.0px;top:455.84999999999985px" width="10" height="10" viewBox="0 0 10 10"><path d="M3.4 1.7 L6.6 5 L3.4 8.3" fill="none" stroke="#a8a8a8" stroke-width="1.45"/></svg>
<svg style="position:absolute;left:33.5px;top:453.79999999999995px" width="13" height="13" viewBox="0 0 16 16"><rect x="2.5" y="1" width="11" height="14" fill="#444" stroke="#222"/><path d="M6 1 Q8 4 10 1" fill="#fff"/>
<path d="M1 3 H3 M1 5.5 H3 M1 8 H3 M1 10.5 H3 M1 13 H3 M13 3 H15 M13 5.5 H15 M13 8 H15 M13 10.5 H15 M13 13 H15" stroke="#222" stroke-width="1.2"/></svg>
<div class="t" style="left:50.5px;top:453.69999999999993px;letter-spacing:-0.229px">Firmware</div>
<svg style="position:absolute;left:19.0px;top:470.4499999999999px" width="10" height="10" viewBox="0 0 10 10"><path d="M3.4 1.7 L6.6 5 L3.4 8.3" fill="none" stroke="#a8a8a8" stroke-width="1.45"/></svg>
<svg style="position:absolute;left:33.5px;top:468.4px" width="13" height="13" viewBox="0 0 16 16"><rect x="0.5" y="0.5" width="5" height="14" fill="#3a3a3a"/><rect x="1.5" y="1.5" width="1.5" height="1.5" fill="#3fdc3f"/><rect x="1" y="4" width="4" height="1" fill="#777"/>
<rect x="4" y="4.5" width="11.5" height="8.5" fill="#48a8ee" stroke="#2a7fc4"/><rect x="5.5" y="6" width="9" height="6" fill="#7cc8f8"/><rect x="7" y="14.5" width="6" height="1" fill="#9ab"/></svg>
<div class="t" style="left:50.5px;top:468.29999999999995px;letter-spacing:-0.161px">Intel(R) Dynamic Platform and Thermal Framework</div>
<div style="position:absolute;left:469px;top:0px;width:13px;height:485px;background:#f0f0f0"></div>
<div style="position:absolute;left:469px;top:14px;width:12px;height:358px;background:#cdcdcd"></div>
<svg style="position:absolute;left:471px;top:4.5px" width="8" height="6" viewBox="0 0 8 6"><path d="M1 5 L4 1.8 L7 5" fill="none" stroke="#606060" stroke-width="1.7"/></svg>
<svg style="position:absolute;left:471px;top:474.5px" width="8" height="6" viewBox="0 0 8 6"><path d="M1 1 L4 4.2 L7 1" fill="none" stroke="#606060" stroke-width="1.7"/></svg>
</div>
<div style="position:absolute;left:645px;top:68px;width:151px;height:483px;border-left:2px solid #939393;border-top:2px solid #7a7a7a;background:#fff;overflow:hidden">
<div style="position:absolute;left:0;top:0;width:152px;height:15px;background:#f0f0f0;border-bottom:1px solid #a8a8a8"></div>
<div class="t" style="left:4px;top:0.8999999999999999px;font-weight:bold;font-size:9.2px;letter-spacing:-0.1px">Acciones</div>
<div style="position:absolute;left:0;top:16px;width:152px;height:21px;background:linear-gradient(#c2d6ec,#a8c2e1);border-top:1px solid #e4eef8;box-sizing:border-box"></div>
<div class="t" style="left:5.5px;top:20.9px;letter-spacing:-0.05px">Administrador de dispositiv...</div>
<svg style="position:absolute;left:137px;top:24px" width="9" height="6" viewBox="0 0 9 6"><path d="M0.5 5.5 L4.5 0.5 L8.5 5.5 Z" fill="#000"/></svg>
<div class="t" style="left:25.5px;top:39.9px;">Acciones adicionales</div>
<svg style="position:absolute;left:140px;top:42px" width="5" height="8" viewBox="0 0 5 8"><path d="M0.5 0 L4.5 4 L0.5 8 Z" fill="#000"/></svg>
</div>
<div style="position:absolute;left:157px;top:69px;width:1px;height:484px;background:#b4b4b4"></div>
<div style="position:absolute;left:642px;top:69px;width:1px;height:484px;background:#f9f9f9"></div>
<div style="position:absolute;left:155px;top:553px;width:644px;height:2px;background:#ebebeb"></div>
<div style="position:absolute;left:1px;top:555px;width:798px;height:1px;background:#e6e6e6"></div>
<div style="position:absolute;left:798px;top:68px;width:1px;height:485px;background:#f6f4f2"></div>
<div style="position:absolute;left:620px;top:556px;width:1px;height:16px;background:#dadada"></div>
<div style="position:absolute;left:728px;top:556px;width:1px;height:16px;background:#dadada"></div>
<div style="position:absolute;left:797px;top:556px;width:1px;height:16px;background:#dadada"></div>
</body></html>
